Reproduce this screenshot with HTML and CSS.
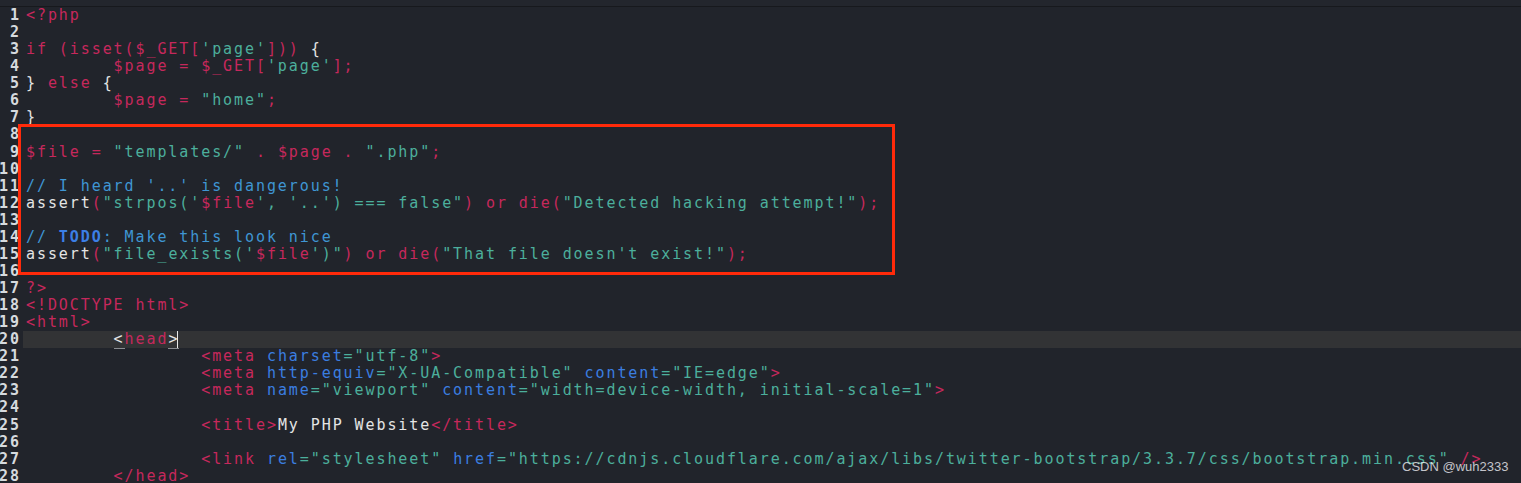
FILE: index.html
```html
<!DOCTYPE html>
<html lang="en">

<head>
    <meta charset="UTF-8">
    <meta name="viewport" content="width=device-width, initial-scale=1.0">
    <title>index.php</title>
    <link rel="stylesheet" href="styles.css">
</head>

<body>

    <div class="topbar"></div>

    <div class="editor">
        <div class="line"><span class="num">1</span><span class="code"><span class="k">&lt;?php</span></span></div>
        <div class="line"><span class="num">2</span><span class="code"></span></div>
        <div class="line"><span class="num">3</span><span class="code"><span class="k">if (isset($_GET[</span><span class="s">'page'</span><span class="k">])) </span>{</span></div>
        <div class="line"><span class="num">4</span><span class="code">        <span class="k">$page = $_GET[</span><span class="s">'page'</span><span class="k">];</span></span></div>
        <div class="line"><span class="num">5</span><span class="code">} <span class="k">else</span> {</span></div>
        <div class="line"><span class="num">6</span><span class="code">        <span class="k">$page = </span><span class="s">"home"</span><span class="k">;</span></span></div>
        <div class="line"><span class="num">7</span><span class="code">}</span></div>
        <div class="line"><span class="num">8</span><span class="code"></span></div>
        <div class="line"><span class="num">9</span><span class="code"><span class="k">$file = </span><span class="s">"templates/"</span><span class="k"> . $page . </span><span class="s">".php"</span><span class="k">;</span></span></div>
        <div class="line"><span class="num">10</span><span class="code"></span></div>
        <div class="line"><span class="num">11</span><span class="code"><span class="c">// I heard '..' is dangerous!</span></span></div>
        <div class="line"><span class="num">12</span><span class="code">assert<span class="k">(</span><span class="s">"strpos('</span><span class="k">$file</span><span class="s">', '..') === false"</span><span class="k">) or die(</span><span class="s">"Detected hacking attempt!"</span><span class="k">);</span></span></div>
        <div class="line"><span class="num">13</span><span class="code"></span></div>
        <div class="line"><span class="num">14</span><span class="code"><span class="c">// <b class="todo">TODO</b>: Make this look nice</span></span></div>
        <div class="line"><span class="num">15</span><span class="code">assert<span class="k">(</span><span class="s">"file_exists('</span><span class="k">$file</span><span class="s">')"</span><span class="k">) or die(</span><span class="s">"That file doesn't exist!"</span><span class="k">);</span></span></div>
        <div class="line"><span class="num">16</span><span class="code"></span></div>
        <div class="line"><span class="num">17</span><span class="code"><span class="k">?&gt;</span></span></div>
        <div class="line"><span class="num">18</span><span class="code"><span class="k">&lt;!DOCTYPE html&gt;</span></span></div>
        <div class="line"><span class="num">19</span><span class="code"><span class="k">&lt;html&gt;</span></span></div>
        <div class="line current"><span class="num">20</span><span class="code">        <span class="match">&lt;</span><span class="k">head</span><span class="match">&gt;</span><span class="cursor"></span></span></div>
        <div class="line"><span class="num">21</span><span class="code">                <span class="k">&lt;meta</span> <span class="a">charset</span><span class="s">="utf-8"</span><span class="k">&gt;</span></span></div>
        <div class="line"><span class="num">22</span><span class="code">                <span class="k">&lt;meta</span> <span class="a">http-equiv</span><span class="s">="X-UA-Compatible"</span> <span class="a">content</span><span class="s">="IE=edge"</span><span class="k">&gt;</span></span></div>
        <div class="line"><span class="num">23</span><span class="code">                <span class="k">&lt;meta</span> <span class="a">name</span><span class="s">="viewport"</span> <span class="a">content</span><span class="s">="width=device-width, initial-scale=1"</span><span class="k">&gt;</span></span></div>
        <div class="line"><span class="num">24</span><span class="code"></span></div>
        <div class="line"><span class="num">25</span><span class="code">                <span class="k">&lt;title&gt;</span>My PHP Website<span class="k">&lt;/title&gt;</span></span></div>
        <div class="line"><span class="num">26</span><span class="code"></span></div>
        <div class="line"><span class="num">27</span><span class="code">                <span class="k">&lt;link</span> <span class="a">rel</span><span class="s">="stylesheet"</span> <span class="a">href</span><span class="s">="https://cdnjs.cloudflare.com/ajax/libs/twitter-bootstrap/3.3.7/css/bootstrap.min.css"</span><span class="k"> /&gt;</span></span></div>
        <div class="line"><span class="num">28</span><span class="code">        <span class="k">&lt;/head&gt;</span></span></div>

        <div class="highlight-box"></div>
    </div>

    <div class="watermark">CSDN @wuh2333</div>

</body>

</html>
```

FILE: styles.css
```css
* {
    margin: 0;
    padding: 0;
    box-sizing: border-box;
}

html,
body {
    width: 1521px;
    height: 483px;
    overflow: hidden;
}

body {
    background-color: #21242b;
    position: relative;
}

.topbar {
    height: 7px;
    background-color: #23262d;
    border-bottom: 1px solid #17191d;
}

.editor {
    position: relative;
    font-family: 'DejaVu Sans Mono', 'Liberation Mono', monospace;
    font-size: 15px;
    letter-spacing: 1.92px;
    line-height: 17.07px;
    color: #e4e4e4;
}

.line {
    display: flex;
    height: 17.07px;
}

.line.current {
    background: linear-gradient(to right, transparent 23px, #323335 23px);
}

.num {
    flex-shrink: 0;
    width: 26px;
    margin-left: -5px;
    text-align: right;
    color: #d6dade;
    font-weight: bold;
}

.code {
    padding-left: 5px;
    white-space: pre;
}

.k {
    color: #c6285c;
}

.s {
    color: #4caf9c;
}

.c {
    color: #3f96d3;
}

.todo {
    color: #3c7fe6;
}

.a {
    color: #3b7ee0;
}

.match {
    border-bottom: 1px solid #8a8d92;
}

.cursor {
    display: inline-block;
    width: 1px;
    height: 17px;
    margin-left: -1.92px;
    vertical-align: top;
    background-color: #e8e8e8;
}

.highlight-box {
    position: absolute;
    left: 18px;
    top: 117px;
    width: 877px;
    height: 151px;
    border: 3px solid #ff2a0a;
}

.watermark {
    position: absolute;
    left: 1402px;
    top: 459px;
    font-family: 'Liberation Sans', Arial, sans-serif;
    font-size: 13px;
    color: rgba(235, 235, 240, 0.82);
}
```
